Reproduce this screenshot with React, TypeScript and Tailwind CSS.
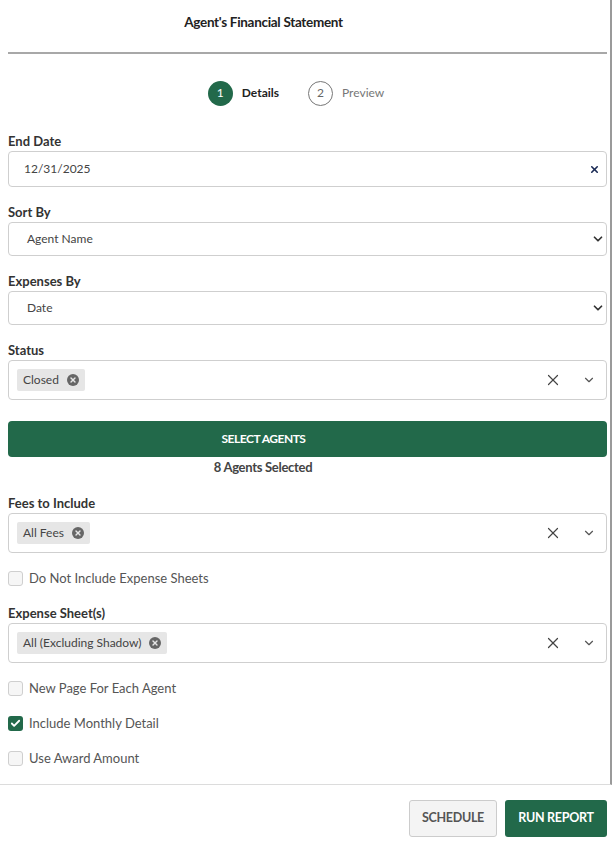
import { Check, ChevronDown, X } from "lucide-react";

const font = { fontFamily: "Lato, 'Open Sans', sans-serif" };

function Label({ children }: { children: React.ReactNode }) {
  return <div className="text-[13px] font-bold text-[#333] leading-[18px] mb-[1px]">{children}</div>;
}

function Select({ value }: { value: string }) {
  return (
    <div className="h-[34px] border border-[#cfcfcf] rounded-[4px] flex items-center justify-between pl-[18px] pr-[1px] text-[12px] text-[#444]">
      <span>{value}</span>
      <ChevronDown size={14} strokeWidth={3} className="text-[#333]" />
    </div>
  );
}

function Multi({ chip }: { chip: string }) {
  return (
    <div className="h-[40px] border border-[#cfcfcf] rounded-[4px] flex items-center pl-[8px] pr-[10px]">
      <span className="h-[22px] bg-[#e6e6e6] rounded-[2px] flex items-center gap-[8px] pl-[6px] pr-[6px] text-[12px] text-[#444]">
        {chip}
        <span className="w-[12px] h-[12px] rounded-full bg-[#666] flex items-center justify-center">
          <X size={8} strokeWidth={4} className="text-[#e6e6e6]" />
        </span>
      </span>
      <span className="flex-1" />
      <X size={18} strokeWidth={1.6} className="text-[#444]" />
      <ChevronDown size={14} strokeWidth={2} className="text-[#555] ml-[20px]" />
    </div>
  );
}

function Box({ checked, label }: { checked?: boolean; label: string }) {
  return (
    <div className="h-[35px] flex items-center gap-[6px] text-[13px] text-[#555]">
      {checked ? (
        <span className="w-[15px] h-[15px] rounded-[3px] bg-[#22694a] flex items-center justify-center">
          <Check size={11} strokeWidth={4} className="text-white" />
        </span>
      ) : (
        <span className="w-[15px] h-[15px] rounded-[3px] border border-[#cfcfcf] bg-[#f6f6f6]" />
      )}
      <span>{label}</span>
    </div>
  );
}

export default function App() {
  return (
    <div className="w-[612px] h-[841px] bg-white flex flex-col" style={font}>
      <div className="flex-1 border-r-2 border-[#9a9a9a] pl-[8px] pr-[3px] border-b border-b-[#dcdcdc]">
        <div className="h-[44px] flex items-center justify-center pr-[88px] text-[13.5px] tracking-[-0.3px] font-bold text-[#222]">
          Agent's Financial Statement
        </div>
        <div className="h-[2px] bg-[#a8a8a8] mt-[8px]" />
        <div className="h-[54px] mt-[12px] flex items-center justify-center pr-[23px] text-[12px]">
          <span className="w-[25px] h-[25px] rounded-full bg-[#22694a] text-white flex items-center justify-center">1</span>
          <span className="ml-[9px] font-bold text-[#222]">Details</span>
          <span className="ml-[29px] w-[25px] h-[25px] rounded-full border border-[#777] text-[#666] flex items-center justify-center">2</span>
          <span className="ml-[9px] text-[#777]">Preview</span>
        </div>
        <div className="pt-[12px]">
          <Label>End Date</Label>
          <div className="h-[36px] border border-[#cfcfcf] rounded-[4px] flex items-center justify-between pl-[15px] pr-[6px] text-[12px] text-[#444]">
            <span>12/31/2025</span>
            <X size={11} strokeWidth={3.5} className="text-[#1a2a55]" />
          </div>
        </div>
        <div className="mt-[16px]">
          <Label>Sort By</Label>
          <Select value="Agent Name" />
        </div>
        <div className="mt-[16px]">
          <Label>Expenses By</Label>
          <Select value="Date" />
        </div>
        <div className="mt-[16px]">
          <Label>Status</Label>
          <Multi chip="Closed" />
        </div>
        <div className="mt-[21px] h-[36px] rounded-[4px] bg-[#22694a] text-white text-[12px] tracking-[-0.5px] font-bold flex items-center justify-center pr-[88px]">
          SELECT AGENTS
        </div>
        <div className="h-[22px] flex items-center justify-center pr-[89px] text-[13px] tracking-[-0.3px] font-bold text-[#444]">
          8 Agents Selected
        </div>
        <div className="mt-[15px]">
          <Label>Fees to Include</Label>
          <Multi chip="All Fees" />
        </div>
        <div className="mt-[8px]">
          <Box label="Do Not Include Expense Sheets" />
        </div>
        <div className="mt-[8px]">
          <Label>Expense Sheet(s)</Label>
          <Multi chip="All (Excluding Shadow)" />
        </div>
        <div className="mt-[8px]">
          <Box label="New Page For Each Agent" />
          <Box checked label="Include Monthly Detail" />
          <Box label="Use Award Amount" />
        </div>
      </div>
      <div className="h-[56px] flex items-start justify-end gap-[8px] pr-[5px] pt-[15px]">
        <button className="w-[88px] h-[37px] rounded-[3px] border border-[#ccc] bg-[#f4f4f4] text-[#555] text-[12.5px] tracking-[-0.3px] font-bold">
          SCHEDULE
        </button>
        <button className="w-[102px] h-[37px] rounded-[3px] bg-[#22694a] text-white text-[12.5px] tracking-[-0.3px] font-bold">
          RUN REPORT
        </button>
      </div>
    </div>
  );
}
